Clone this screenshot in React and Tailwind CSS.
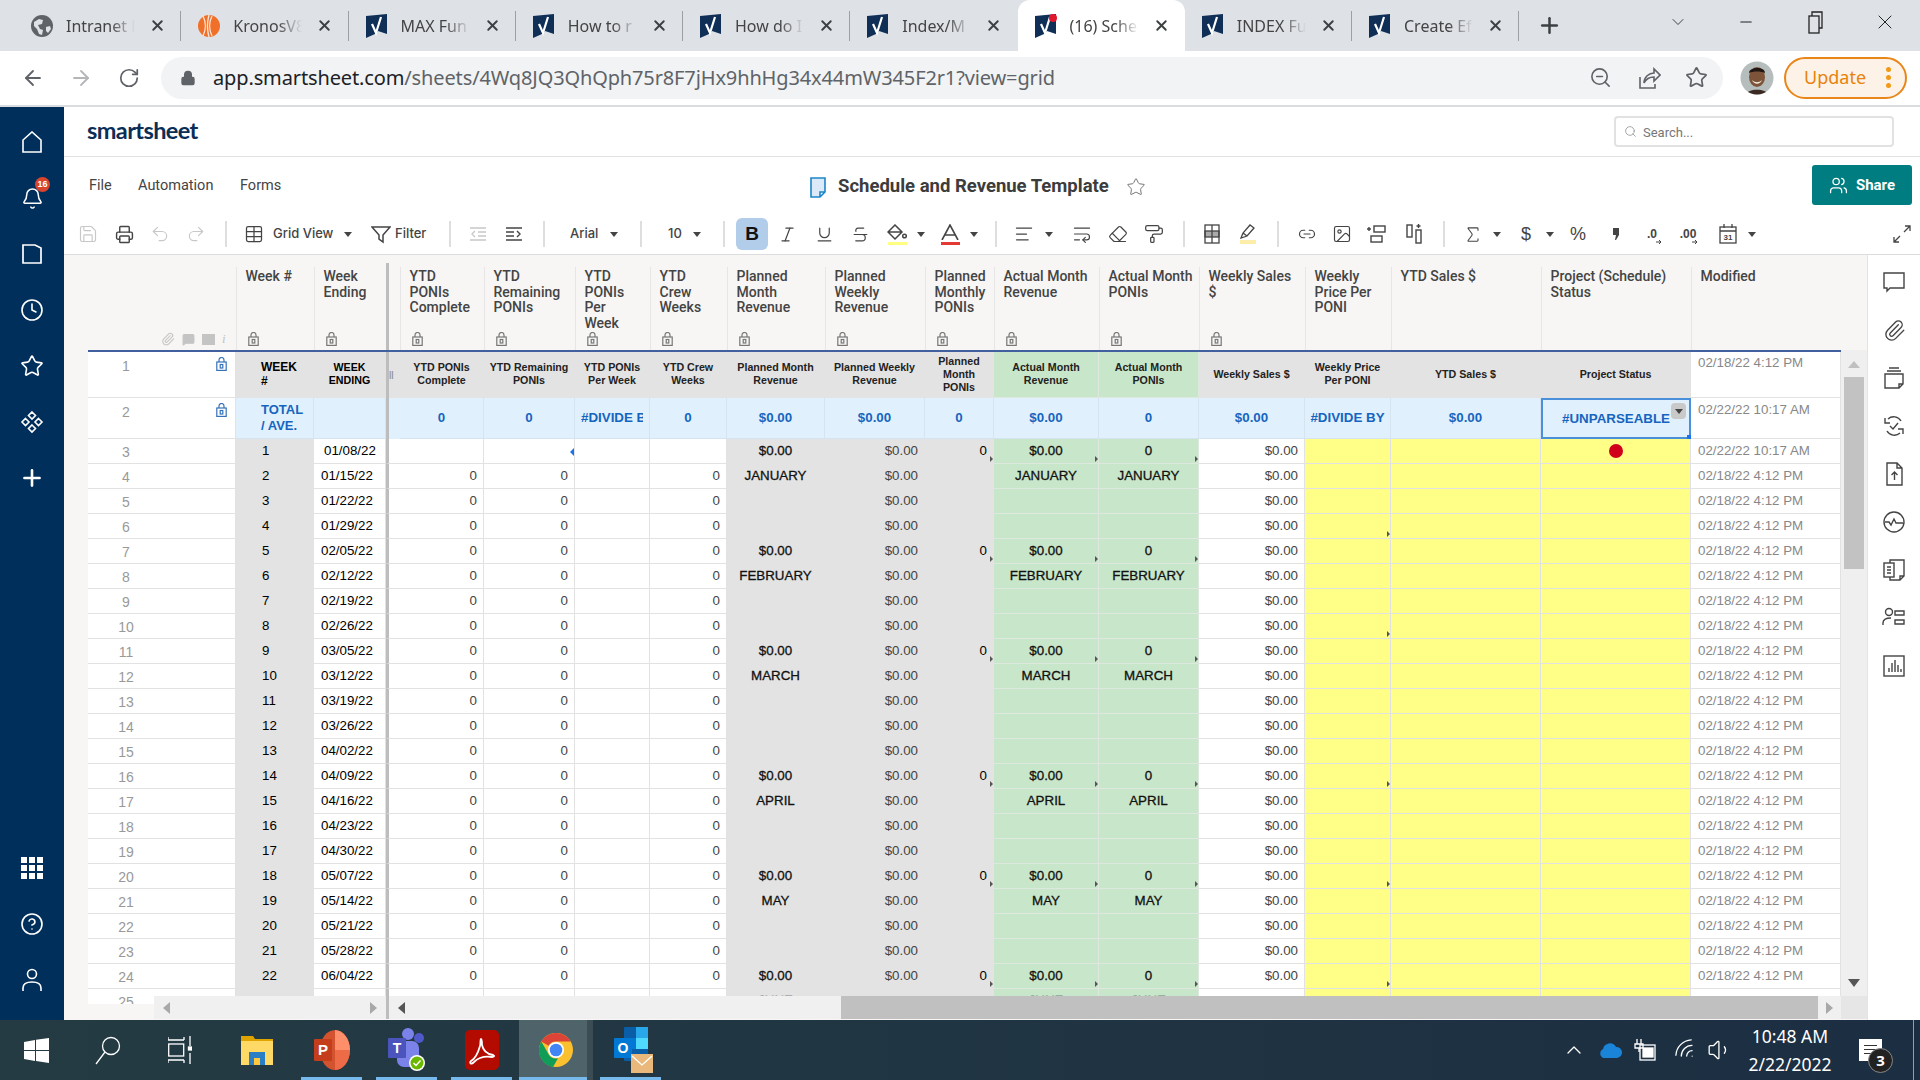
import clsx from "clsx";
import {
  ArrowLeft, ArrowRight, RotateCw, X, Plus, ChevronDown, Minus, Lock, Search, Star,
  ZoomOut, Bell, Clock, CircleHelp, Paperclip, MessageSquare, Save, Printer, Undo2, Redo2,
  Table, Italic, Underline, Strikethrough, AlignLeft, WrapText, Eraser, PaintRoller, Sigma,
  Link2, Image, Users, Volume1, Wifi, ChevronUp,
} from "lucide-react";

const tabs = [
  { title: "Intranet H", icon: "globe" },
  { title: "KronosV8", icon: "kronos" },
  { title: "MAX Fun", icon: "ss" },
  { title: "How to r", icon: "ss" },
  { title: "How do I", icon: "ss" },
  { title: "Index/M", icon: "ss" },
  { title: "(16) Sche", icon: "ss", active: true },
  { title: "INDEX Fu", icon: "ss" },
  { title: "Create Ef", icon: "ss" },
];

const dates = [
  "01/08/22", "01/15/22", "01/22/22", "01/29/22", "02/05/22", "02/12/22", "02/19/22", "02/26/22",
  "03/05/22", "03/12/22", "03/19/22", "03/26/22", "04/02/22", "04/09/22", "04/16/22", "04/23/22",
  "04/30/22", "05/07/22", "05/14/22", "05/21/22", "05/28/22", "06/04/22", "06/11/22",
];

const monthStarts = { 1: "JANUARY", 5: "FEBRUARY", 9: "MARCH", 14: "APRIL", 18: "MAY", 22: "JUNE" };
const priceMarks = [4, 8, 14, 18, 22];

const headers = [
  { label: "Week #", lock: true },
  { label: "Week\nEnding", lock: true },
  { label: "", sliver: true },
  { label: "YTD\nPONIs\nComplete", lock: true },
  { label: "YTD\nRemaining\nPONIs", lock: true },
  { label: "YTD\nPONIs\nPer\nWeek", lock: true },
  { label: "YTD\nCrew\nWeeks", lock: true },
  { label: "Planned\nMonth\nRevenue", lock: true },
  { label: "Planned\nWeekly\nRevenue", lock: true },
  { label: "Planned\nMonthly\nPONIs", lock: true },
  { label: "Actual Month\nRevenue", lock: true },
  { label: "Actual Month\nPONIs", lock: true },
  { label: "Weekly Sales\n$", lock: true },
  { label: "Weekly\nPrice Per\nPONI" },
  { label: "YTD Sales $" },
  { label: "Project (Schedule)\nStatus" },
  { label: "Modified" },
];

const titleRow = [
  "YTD PONIs\nComplete", "YTD Remaining\nPONIs", "YTD PONIs\nPer Week", "YTD Crew\nWeeks",
  "Planned Month\nRevenue", "Planned Weekly\nRevenue", "Planned\nMonth\nPONIs",
];

const totals = ["0", "0", "#DIVIDE BY ZERO", "0", "$0.00", "$0.00", "0", "$0.00", "0", "$0.00", "#DIVIDE BY", "$0.00"];

const gridCols =
  "grid grid-cols-[148px_78px_72px_14px_84px_91px_75px_77px_98px_100px_69px_105px_100px_106px_86px_150px_150px_150px]";

const white = "bg-white border-[#e2e2e2]";
const gray = "bg-[#e3e3e3] border-[#e3e3e3]";
const green = "bg-[#c8e6c9] border-[#dfe8df]";
const yellow = "bg-[#ffff88] border-[#e2e2e2]";
const blue = "bg-[#e1f0fd] border-[#d5e4f0]";

function Favicon({ type, dot }) {
  if (type === "globe") {
    return (
      <svg width="22" height="22" viewBox="0 0 22 22">
        <circle cx="11" cy="11" r="11" fill="#5f6368" />
        <path d="M3 7l5-3 4 1-1 4-4 1 2 4 3 1-1 5-3-1-2-5-3-3zM15 12l4-1 1 3-3 4-2-2z" fill="#dee1e6" />
      </svg>
    );
  }
  if (type === "kronos") {
    return (
      <svg width="22" height="24" viewBox="0 0 22 24">
        <circle cx="11" cy="12" r="11" fill="#f0702a" />
        <path d="M5 2c3 6 3 14 0 20M11 1c-2 7-2 15 0 22M14 2c-3 6-3 14 0 20" stroke="#fde4d2" strokeWidth="1.4" fill="none" />
      </svg>
    );
  }
  return (
    <svg width="22" height="24" viewBox="0 0 22 24">
      <path d="M0 2l21-2v20l-9-3-3 3-9 4z" fill="#0f2f57" />
      <path d="M6 10l4 9 5-16" stroke="#fff" strokeWidth="2.2" fill="none" />
      {dot && <circle cx="18" cy="4" r="4" fill="#e0182d" />}
    </svg>
  );
}

function Caret({ className }) {
  return (
    <svg width="8" height="5" viewBox="0 0 8 5" className={className}>
      <path d="M0 0h8L4 5z" fill="#444" />
    </svg>
  );
}

function Arrow({ dir, color }) {
  return (
    <svg width="7" height="12" viewBox="0 0 7 12">
      <path d={dir === "left" ? "M7 0v12L0 6z" : "M0 0v12l7-6z"} fill={color} />
    </svg>
  );
}

function Corner() {
  return <span className="absolute right-0 bottom-[1px] w-0 h-0 border-y-[3px] border-y-transparent border-l-[3px] border-l-[#555]" />;
}

function SmallLock({ className }) {
  return (
    <svg width="11" height="14" viewBox="0 0 11 14" className={className} fill="none" stroke="currentColor" strokeWidth="1.2">
      <path d="M3 5V3a2.5 2.5 0 0 1 5 0v2" />
      <rect x="0.8" y="5" width="9.4" height="8.4" />
      <rect x="4.2" y="7.5" width="2.6" height="3.5" />
    </svg>
  );
}

function Tabs() {
  return (
    <div className="h-[51px] bg-[#dee1e6] flex items-stretch pl-[14px] font-['Noto_Sans',sans-serif] shrink-0">
      {tabs.map((t, i) => (
        <div
          key={i}
          className={clsx(
            "w-[167.25px] flex items-center pl-[17px] relative",
            t.active && "bg-white rounded-t-xl"
          )}
        >
          <Favicon type={t.icon} dot={t.active} />
          <span className="ml-[13px] w-[72px] overflow-hidden whitespace-nowrap text-[16px] text-[#444] [mask-image:linear-gradient(to_right,black_62%,transparent_96%)]">
            {t.title}
          </span>
          <X size={17} strokeWidth={2.7} className="ml-[11px] text-[#3c4043]" />
          {!t.active && i !== 5 && <span className="absolute right-0 top-[11px] bottom-[10px] w-px bg-[#9aa0a6]" />}
        </div>
      ))}
      <div className="w-[61px] flex items-center justify-center">
        <Plus size={25} strokeWidth={2.4} className="text-[#3c4043]" />
      </div>
      <div className="ml-[76px] w-[44px] flex items-center justify-center pb-[8px]">
        <ChevronDown size={20} strokeWidth={1} className="text-[#222]" />
      </div>
      <div className="ml-[24px] w-[44px] flex items-center justify-center pb-[8px]">
        <Minus size={18} strokeWidth={1.4} className="text-[#222]" />
      </div>
      <div className="ml-[26px] w-[44px] flex items-center justify-center pb-[8px]">
        <svg width="16" height="24" viewBox="0 0 16 24" fill="none" stroke="#222" strokeWidth="1.3">
          <rect x="1" y="6" width="10" height="17" />
          <path d="M4 6V2h10v16h-3" />
        </svg>
      </div>
      <div className="ml-[25px] w-[44px] flex items-center justify-center pb-[8px]">
        <X size={24} strokeWidth={1} className="text-[#222]" />
      </div>
    </div>
  );
}

function AddressBar() {
  return (
    <div className="h-[56px] bg-white border-b-2 border-[#dadce0] flex items-center pb-[1px] shrink-0 font-['Noto_Sans',sans-serif]">
      <ArrowLeft size={24} strokeWidth={1.8} className="ml-[21px] text-[#5f6368]" />
      <ArrowRight size={24} strokeWidth={1.8} className="ml-[24px] text-[#b4b7ba]" />
      <RotateCw size={22} strokeWidth={1.9} className="ml-[25px] text-[#5f6368]" />
      <div className="ml-[21px] w-[1562px] h-[42px] rounded-full bg-[#f1f3f4] flex items-center">
        <Lock size={16} fill="#5f6368" strokeWidth={2} className="ml-[19px] text-[#5f6368]" />
        <span className="ml-[17px] text-[20px] tracking-[-0.13px] text-[#5f6368] whitespace-nowrap w-[1376px]">
          <span className="text-[#202124]">app.smartsheet.com</span>/sheets/4Wq8JQ3QhQph75r8F7jHx9hhHg34x44mW345F2r1?view=grid
        </span>
        <ZoomOut size={23} strokeWidth={1.7} className="text-[#5f6368]" />
        <svg width="24" height="24" viewBox="0 0 24 24" fill="none" stroke="#5f6368" strokeWidth="1.6" className="ml-[25px]">
          <path d="M3 11v11h15v-4M7 17c0-6 5-10 10-10V3l6 6-6 6v-4c-4 0-8 2-10 6z" />
        </svg>
        <Star size={23} strokeWidth={1.8} className="ml-[24px] text-[#5f6368]" />
      </div>
      <svg width="34" height="34" viewBox="0 0 34 34" className="ml-[17px]">
        <defs>
          <clipPath id="av"><circle cx="17" cy="17" r="16.5" /></clipPath>
        </defs>
        <g clipPath="url(#av)">
          <rect width="34" height="34" fill="#b5bdbd" />
          <ellipse cx="17" cy="16" rx="8" ry="10" fill="#7d5439" />
          <path d="M9 12c0-6 16-7 16 0-4-2-12-2-16 0z" fill="#211814" />
          <path d="M12 19c3 3 7 3 10 0-2 5-8 5-10 0z" fill="#f4ecdf" />
          <path d="M6 34c1-7 21-7 22 0z" fill="#3a2a22" />
        </g>
      </svg>
      <div className="ml-[10px] w-[123px] h-[42px] rounded-full border-2 border-[#e9861a] bg-[#fdf2e7] flex items-center text-[#e8820c]">
        <span className="ml-[18px] text-[18px]">Update</span>
        <span className="ml-[20px] flex flex-col gap-[3px]">
          <i className="w-[5px] h-[5px] rounded-full bg-[#f09a1a]" />
          <i className="w-[5px] h-[5px] rounded-full bg-[#f09a1a]" />
          <i className="w-[5px] h-[5px] rounded-full bg-[#f09a1a]" />
        </span>
      </div>
    </div>
  );
}

function Sidebar() {
  const item = "h-14 flex items-center justify-center relative";
  return (
    <div className="w-16 bg-[#012f5b] text-white flex flex-col justify-between shrink-0">
      <div className="pt-[7px]">
        <div className={item}>
          <svg width="20" height="22" viewBox="0 0 20 22" fill="none" stroke="#fff" strokeWidth="1.6"><path d="M1 21V9l9-8 9 8v12z" /></svg>
        </div>
        <div className={item}>
          <Bell size={23} strokeWidth={1.6} />
          <span className="absolute left-[35px] top-[7px] w-[15px] h-[15px] rounded-full bg-[#d8442c] text-[9px] font-bold flex items-center justify-center font-['Liberation_Sans',sans-serif]">16</span>
        </div>
        <div className={item}>
          <svg width="20" height="20" viewBox="0 0 20 20" fill="none" stroke="#fff" strokeWidth="1.7"><path d="M1 1h12l6 3v15H1z" /></svg>
        </div>
        <div className={item}><Clock size={24} strokeWidth={1.6} /></div>
        <div className={item}><Star size={24} strokeWidth={1.6} /></div>
        <div className={item}>
          <svg width="24" height="24" viewBox="0 0 24 24" fill="none" stroke="#fff" strokeWidth="1.6">
            <path d="M12 2l3.5 3.5L12 9 8.500 5.500zM12 15l3.500 3.500L12 22l-3.500-3.500zM5.500 8.500L9 12l-3.500 3.500L2 12zM18.500 8.500L22 12l-3.500 3.500L15 12z" />
          </svg>
        </div>
        <div className={item}><Plus size={26} strokeWidth={2.4} /></div>
      </div>
      <div className="pb-[12px]">
        <div className={item}>
          <svg width="22" height="22" viewBox="0 0 22 22" fill="#fff">
            {[0, 8, 16].map((y) => [0, 8, 16].map((x) => <rect key={`${x}-${y}`} x={x} y={y} width="6" height="6" />))}
          </svg>
        </div>
        <div className={item}><CircleHelp size={24} strokeWidth={1.6} /></div>
        <div className={item}>
          <svg width="20" height="24" viewBox="0 0 20 24" fill="none" stroke="#fff" strokeWidth="1.6">
            <circle cx="10" cy="6" r="4.500" />
            <path d="M1 23v-3c0-4 3-6 9-6s9 2 9 6v3" />
          </svg>
        </div>
      </div>
    </div>
  );
}

function Sep({ className }) {
  return <span className={clsx("w-[2px] h-[26px] bg-[#dedede] shrink-0", className)} />;
}

function Decimal({ label, className }) {
  return (
    <span className={clsx("relative w-5 text-center text-[12px] font-bold font-['Liberation_Sans',sans-serif]", className)}>
      {label}
      <svg width="6" height="5" viewBox="0 0 6 5" fill="none" stroke="#444" strokeWidth="1" className="absolute right-0 -bottom-[2px]">
        <path d="M0 2h5M3 0l2 2-2 2" />
      </svg>
    </span>
  );
}

function Toolbar() {
  const off = "text-[#c8c8c8]";
  const box = "w-9 flex items-center justify-center";
  const one = "w-5 flex items-center justify-center shrink-0";
  return (
    <div className="h-[45px] border-b border-[#dcdcdc] flex items-center pl-[6px] pt-[4px] text-[#444] text-[14px] font-['Inter',sans-serif] font-medium">
      <div className={clsx(box, off)}><Save size={20} strokeWidth={1.4} /></div>
      <div className={box}><Printer size={19} strokeWidth={1.8} /></div>
      <div className={clsx(box, off)}><Undo2 size={20} strokeWidth={1.4} /></div>
      <div className={clsx(box, off)}><Redo2 size={20} strokeWidth={1.4} /></div>
      <Sep className="ml-[11px]" />
      <div className={clsx(one, "ml-[17px]")}><Table size={20} strokeWidth={1.5} /></div>
      <span className="ml-[9px] w-[60px] whitespace-nowrap text-[13px]">Grid View</span>
      <Caret className="ml-[11px]" />
      <svg width="20" height="20" viewBox="0 0 20 20" fill="none" stroke="#444" strokeWidth="1.5" className="ml-[19px]"><path d="M1 3h18l-7 8v7l-4-3v-4z" /></svg>
      <span className="ml-[4px] w-[32px] text-[13px]">Filter</span>
      <Sep className="ml-[22px]" />
      <svg width="20" height="20" viewBox="0 0 20 20" fill="none" stroke="#c8c8c8" strokeWidth="1.4" className="ml-[17px]"><path d="M2 4h16M2 16h16M10 8h8M10 12h8M7 7l-3 3 3 3" /></svg>
      <svg width="20" height="20" viewBox="0 0 20 20" fill="none" stroke="#444" strokeWidth="1.4" className="ml-[16px]"><path d="M2 4h16M2 16h16M2 8h8M2 12h8M13 7l3 3-3 3" /></svg>
      <Sep className="ml-[19px]" />
      <span className="ml-[25px] w-[28px] text-[13px]">Arial</span>
      <Caret className="ml-[12px]" />
      <Sep className="ml-[22px]" />
      <span className="ml-[23px] w-5 text-center text-[13px]">10</span>
      <Caret className="ml-[8px]" />
      <Sep className="ml-[22px]" />
      <div className="ml-[11px] w-8 h-8 rounded-md bg-[#b1cdea] flex items-center justify-center text-[#111] text-[19px] font-bold font-['Liberation_Sans',sans-serif]">B</div>
      <div className={clsx(box, "ml-[1px]")}><Italic size={19} strokeWidth={1.5} /></div>
      <div className={clsx(box, "ml-[1px]")}><Underline size={19} strokeWidth={1.5} /></div>
      <div className={box}><Strikethrough size={19} strokeWidth={1.5} /></div>
      <div className="ml-[7px] w-6 flex flex-col items-center">
        <svg width="20" height="17" viewBox="0 0 20 17" fill="none" stroke="#444" strokeWidth="1.5"><path d="M8 1l7 7-7 7-7-7zM1 8h14" /><circle cx="17.500" cy="12" r="1.800" /></svg>
        <span className="w-[19px] h-[3px] mt-[1px] bg-[#ffff80]" />
      </div>
      <Caret className="ml-[8px]" />
      <div className="ml-[13px] w-6 flex flex-col items-center">
        <svg width="18" height="16" viewBox="0 0 18 16" fill="none" stroke="#444" strokeWidth="1.6"><path d="M1 16L9 1l8 15M4 11h10" /></svg>
        <span className="w-[19px] h-[3px] mt-[2px] bg-[#e53935]" />
      </div>
      <Caret className="ml-[8px]" />
      <Sep className="ml-[17px]" />
      <div className={clsx(one, "ml-[17px]")}><AlignLeft size={20} strokeWidth={1.5} /></div>
      <Caret className="ml-[11px]" />
      <div className={clsx(one, "ml-[19px]")}><WrapText size={20} strokeWidth={1.4} /></div>
      <div className={clsx(one, "ml-[16px]")}><Eraser size={20} strokeWidth={1.4} /></div>
      <div className={clsx(one, "ml-[16px]")}><PaintRoller size={20} strokeWidth={1.5} /></div>
      <Sep className="ml-[19px]" />
      <svg width="20" height="20" viewBox="0 0 20 20" className="ml-[17px]" stroke="#444" strokeWidth="1.3" fill="none">
        <rect x="3" y="7" width="14" height="6" fill="#aaa" />
        <rect x="3" y="1" width="14" height="18" />
        <path d="M10 1v18" />
      </svg>
      <div className="ml-[16px] w-5 flex flex-col items-center">
        <svg width="16" height="15" viewBox="0 0 16 15" fill="none" stroke="#444" strokeWidth="1.3"><path d="M1 14l2-5 7-8 4 3-7 8zM3 9l4 3" /></svg>
        <span className="w-4 h-[4px] bg-[#fdedaa] mt-[1px]" />
      </div>
      <Sep className="ml-[19px]" />
      <div className={clsx(one, "ml-[18px]")}><Link2 size={18} strokeWidth={1.6} /></div>
      <div className={clsx(one, "ml-[15px]")}><Image size={20} strokeWidth={1.4} /></div>
      <svg width="20" height="20" viewBox="0 0 20 20" className="ml-[15px]" fill="none" stroke="#444" strokeWidth="1.4"><rect x="7" y="2" width="11" height="6" /><rect x="4" y="12" width="11" height="6" /><path d="M2 3v4M0 5h4" /></svg>
      <svg width="20" height="20" viewBox="0 0 20 20" className="ml-[17px]" fill="none" stroke="#444" strokeWidth="1.4"><rect x="3" y="1" width="5" height="12" /><rect x="12" y="6" width="5" height="13" /><path d="M14.500 0v4M12.500 2h4" /></svg>
      <Sep className="ml-[19px]" />
      <div className={clsx(one, "ml-[18px]")}><Sigma size={21} strokeWidth={1.3} /></div>
      <Caret className="ml-[10px]" />
      <span className="ml-[15px] w-5 text-center text-[18px] font-normal font-['Liberation_Sans',sans-serif]">$</span>
      <Caret className="ml-[10px]" />
      <span className="ml-[14px] w-5 text-center text-[18px] font-normal font-['Liberation_Sans',sans-serif]">%</span>
      <svg width="20" height="20" viewBox="0 0 20 20" className="ml-[18px]" fill="#444"><path d="M7 4h6v7l-3 5h-1l1-5H7z" /></svg>
      <Decimal label=".0" className="ml-[16px]" />
      <Decimal label=".00" className="ml-[16px]" />
      <svg width="20" height="20" viewBox="0 0 20 20" className="ml-[20px]" fill="none" stroke="#444" strokeWidth="1.3">
        <rect x="2" y="3" width="16" height="16" />
        <path d="M2 7h16M6 0v4M14 0v4" />
        <text x="10" y="16" textAnchor="middle" fontSize="8" fontWeight="700" fill="#444" stroke="none" fontFamily="Liberation Sans">31</text>
      </svg>
      <Caret className="ml-[10px]" />
      <svg width="20" height="20" viewBox="0 0 20 20" className="ml-auto mr-[8px]" fill="none" stroke="#444" strokeWidth="1.3"><path d="M12 8l6-6M13 2h5v5M8 12l-6 6M7 18H2v-5" /></svg>
    </div>
  );
}

function GridHeader() {
  return (
    <div className="h-[95px] bg-[#f7f6f5] pl-6 shrink-0 font-['Roboto',sans-serif]">
      <div className={clsx(gridCols, "h-full")}>
        <div className="mt-[12px] flex items-end justify-end pb-[4px] pr-[9px] gap-[7px] text-[#c4c4c4]">
          <Paperclip size={14} strokeWidth={1.8} />
          <MessageSquare size={13} fill="currentColor" />
          <span className="w-[13px] h-[11px] bg-current mb-[1px]" />
          <span className="w-[5px] text-[13px] italic leading-[14px] font-['Liberation_Serif',serif]">i</span>
        </div>
        {headers.map((h, i) =>
          h.sliver ? (
            <div key={i} className="border-l-[3px] border-[#bdbdbd] mt-[8px]" />
          ) : (
            <div key={i} className="mt-[12px] border-l border-[#e6e6e6] flex flex-col pt-[2px] pl-[8.5px] pb-[4px] text-[14px] leading-[15.7px] font-medium text-[#444] overflow-hidden">
              <span className="whitespace-pre">{h.label}</span>
              {h.lock && <SmallLock className="mt-auto ml-[2px] text-[#777] shrink-0" />}
            </div>
          )
        )}
      </div>
    </div>
  );
}

function Cell({ tone, className, children }) {
  return (
    <div className={clsx("relative border-b border-r flex items-center overflow-hidden whitespace-nowrap", tone, className)}>
      {children}
    </div>
  );
}

function DataRow({ week, date, row }) {
  const month = monthStarts[week - 1];
  const start = monthStarts[week] !== undefined;
  const strong = "justify-center text-[#111] [-webkit-text-stroke:0.3px_#111]";
  const num = "justify-end pr-[6px] text-[#444]";
  const zero = week === 1 ? "" : "0";
  return (
    <div className={clsx(gridCols, "h-[25px] text-[13.33px]")}>
      <Cell tone={white} className="pt-[3px]">
        <span className="w-[76px] text-center text-[#999] text-[14px]">{row}</span>
      </Cell>
      <Cell tone={gray} className="pl-[26px] text-black">{week}</Cell>
      <Cell tone={white} className={clsx("text-black", week === 1 ? "pl-[10px]" : "pl-[7px]")}>{date}</Cell>
      <div className="bg-white border-l-[3px] border-b border-[#bdbdbd] [border-bottom-color:#e2e2e2]" />
      <Cell tone={white} className={num}>{zero}</Cell>
      <Cell tone={white} className={num}>
        {zero}
        {week === 1 && <span className="absolute right-0 top-[9px] w-0 h-0 border-y-[4px] border-y-transparent border-r-[4px] border-r-[#1a73e8]" />}
      </Cell>
      <Cell tone={white} />
      <Cell tone={white} className={num}>{zero}</Cell>
      <Cell tone={gray} className={strong}>{start ? "$0.00" : month}</Cell>
      <Cell tone={gray} className={num}>$0.00</Cell>
      <Cell tone={gray} className="justify-end pr-[6px] text-black">
        {start && "0"}
        {start && <Corner />}
      </Cell>
      <Cell tone={green} className={strong}>
        {start ? "$0.00" : month}
        {start && <Corner />}
      </Cell>
      <Cell tone={green} className={strong}>
        {start ? "0" : month}
        {start && <Corner />}
      </Cell>
      <Cell tone={white} className={num}>$0.00</Cell>
      <Cell tone={yellow}>{priceMarks.includes(week) && <Corner />}</Cell>
      <Cell tone={yellow} />
      <Cell tone={yellow} className="justify-center">
        {week === 1 && <span className="w-[14px] h-[14px] rounded-full bg-[#d0021b]" />}
      </Cell>
      <Cell tone={white} className="pl-[7px] text-[#888]">{week === 1 ? "02/22/22 10:17 AM" : "02/18/22 4:12 PM"}</Cell>
    </div>
  );
}

function GridBody() {
  const small = "justify-center text-center text-[10.67px] leading-[13px] font-bold text-[#222] whitespace-pre pb-[1px]";
  return (
    <div className="w-[1753px] h-[654px] overflow-hidden border-t-2 border-[#41609f] font-['Liberation_Sans',sans-serif]">
      <div className={clsx(gridCols, "h-[46px]")}>
        <Cell tone={white} className="items-start! pt-[4px]">
          <span className="w-[76px] text-center text-[#999] text-[14px]">1</span>
          <SmallLock className="absolute right-[8px] top-[5px] text-[#3572b8]" />
        </Cell>
        <Cell tone={gray} className="pl-[25px] text-[12px] leading-[13.500px] font-bold text-black whitespace-pre">{"WEEK\n#"}</Cell>
        <Cell tone={gray} className={clsx(small, "text-black")}>{"WEEK\nENDING"}</Cell>
        <div className="bg-[#e3e3e3] border-l-[3px] border-[#bdbdbd] text-[10.67px] text-[#888] flex items-center">ll</div>
        {titleRow.map((t, i) => (
          <Cell key={i} tone={gray} className={small}>{t}</Cell>
        ))}
        <Cell tone={green} className={small}>{"Actual Month\nRevenue"}</Cell>
        <Cell tone={green} className={small}>{"Actual Month\nPONIs"}</Cell>
        <Cell tone={gray} className={small}>Weekly Sales $</Cell>
        <Cell tone={gray} className={small}>{"Weekly Price\nPer PONI"}</Cell>
        <Cell tone={gray} className={small}>YTD Sales $</Cell>
        <Cell tone={gray} className={small}>Project Status</Cell>
        <Cell tone={white} className="items-start! pt-[1px] pl-[7px] text-[13.33px] text-[#888]">02/18/22 4:12 PM</Cell>
      </div>
      <div className={clsx(gridCols, "h-[41px] text-[13.33px] font-bold text-[#1565c0]")}>
        <Cell tone={white} className="items-start! pt-[4px] font-normal">
          <span className="w-[76px] text-center text-[#999] text-[14px]">2</span>
          <SmallLock className="absolute right-[8px] top-[5px] text-[#3572b8]" />
        </Cell>
        <Cell tone={blue} className="pl-[25px] text-[13px] leading-[16px] whitespace-pre">{"TOTAL\n/ AVE."}</Cell>
        <Cell tone={blue} />
        <div className="bg-[#e1f0fd] border-l-[3px] border-[#bdbdbd]" />
        {totals.map((t, i) => (
          <Cell key={i} tone={blue} className="justify-center">
            {t === "#DIVIDE BY ZERO" ? <span className="w-[62px] overflow-hidden">{t}</span> : t}
          </Cell>
        ))}
        <div className="relative bg-[#e1f0fd] border-2 border-[#4a8fd9] flex items-center justify-center">
          #UNPARSEABLE
          <span className="absolute right-[3px] top-[3px] w-[15px] h-[16px] bg-[#c9c9c9] rounded-sm flex items-center justify-center"><Caret /></span>
          <span className="absolute -right-[2px] -bottom-[2px] w-[4px] h-[4px] bg-[#1a73e8]" />
        </div>
        <Cell tone={white} className="items-start! pt-[2px] pl-[7px] font-normal text-[#888]">02/22/22 10:17 AM</Cell>
      </div>
      {dates.map((d, i) => (
        <DataRow key={d} week={i + 1} date={d} row={i + 3} />
      ))}
    </div>
  );
}

function HorizontalBar() {
  return (
    <div className="absolute left-[90px] right-0 bottom-[1px] h-[23px] flex bg-[#f0f0f0]">
      <div className="w-[232px] flex items-center justify-between pl-[9px] pr-[9px]">
        <Arrow dir="left" color="#a8a8a8" />
        <Arrow dir="right" color="#a8a8a8" />
      </div>
      <span className="w-[3px] bg-[#bdbdbd]" />
      <div className="w-[24px] flex items-center justify-center"><Arrow dir="left" color="#555" /></div>
      <span className="w-[428px]" />
      <span className="w-[977px] bg-[#c0c0c0]" />
      <div className="w-[23px] flex items-center justify-center"><Arrow dir="right" color="#a8a8a8" /></div>
      <span className="flex-1 bg-[#e6e6e6]" />
    </div>
  );
}

function RightPanel() {
  const item = "h-12 flex items-center justify-center text-[#444]";
  const s = { width: 24, height: 24, viewBox: "0 0 24 24", fill: "none", stroke: "currentColor", strokeWidth: 1.4 };
  return (
    <div className="w-[53px] bg-white border-l border-[#e4e4e4] pt-[3px] shrink-0">
      <div className={item}><svg {...s}><path d="M2 3h20v15H8l-3 3v-3H2z" /></svg></div>
      <div className={item}><Paperclip size={23} strokeWidth={1.4} /></div>
      <div className={item}><svg {...s}><path d="M7 2h10M5 5h14" /><path d="M3 8h18v10l-4 4H3zM21 18h-4v4" /></svg></div>
      <div className={item}><svg {...s}><path d="M19 7a8.500 8.500 0 0 0-13-2M5 17a8.500 8.500 0 0 0 13 2M3 4v5h5M21 20v-5h-5M8 12l3 3 5-6" /></svg></div>
      <div className={item}><svg {...s}><path d="M5 1h10l5 5v17H5zM15 1v5h5M12.500 18v-8M9.500 13l3-3 3 3" /></svg></div>
      <div className={item}><svg {...s}><circle cx="12" cy="12" r="10" /><path d="M3 12h4l2 3 3-6 2 4h7" /></svg></div>
      <div className={item}><svg {...s}><path d="M8 5V2h14v16l-4 4H8v-3M18 22v-4h4" /><rect x="2" y="5" width="10" height="14" /><path d="M5 9h4M5 12h4M5 15h4" /></svg></div>
      <div className={item}><svg {...s}><circle cx="7" cy="6" r="3.500" /><path d="M1 19v-2c0-3 3-5 8-5M13 5h9v4h-9zM13 14h9v4h-9z" /></svg></div>
      <div className={item}><svg {...s}><rect x="2" y="2" width="20" height="20" /><path d="M7 18v-4M10 18V9M13 18V6M16 18v-7M19 18v-3" /></svg></div>
    </div>
  );
}

function Main() {
  return (
    <div className="flex-1 min-w-0 flex flex-col">
      <div className="h-[50px] border-b border-[#e2e2e2] flex items-center justify-between pl-[23px] pr-[26px] shrink-0">
        <span className="text-[23.500px] font-bold tracking-[-0.6px] text-[#0b2e57] pb-[2px] font-['Lato',sans-serif]">smartsheet</span>
        <div className="w-[280px] h-[31px] border-2 border-[#e2e2e2] rounded flex items-center pl-[8px] text-[#777] text-[13px] font-['Roboto',sans-serif]">
          <Search size={13} strokeWidth={1.6} className="text-[#999]" />
          <span className="ml-[6px] pt-[2px]">Search...</span>
        </div>
      </div>
      <div className="h-[53px] flex items-center pl-[25px] pr-[8px] shrink-0 text-[14.500px] text-[#444] font-['Roboto',sans-serif]">
        <span className="w-[22px] mt-[5px]">File</span>
        <span className="ml-[27px] w-[75px] mt-[5px]">Automation</span>
        <span className="ml-[27px] w-[40px] mt-[5px]">Forms</span>
        <svg width="18" height="21" viewBox="0 0 18 21" fill="#dbe9f8" stroke="#1c86c8" strokeWidth="1.6" className="ml-[529px] mt-[7px]"><path d="M2 1h14v14l-5 5H2zM16 15h-5v5" /></svg>
        <span className="ml-[11px] w-[273px] mt-[7px] text-[18.500px] font-bold text-[#3c3c3c] whitespace-nowrap">Schedule and Revenue Template</span>
        <Star size={20} strokeWidth={1.2} className="ml-[15px] mt-[7px] text-[#777]" />
        <div className="ml-auto mt-[3px] w-[100px] h-[40px] bg-[#007d80] rounded-[3px] flex items-center justify-center gap-[8px] text-white font-bold text-[15px]">
          <Users size={19} strokeWidth={1.6} />
          Share
        </div>
      </div>
      <Toolbar />
      <div className="flex-1 min-h-0 flex">
        <div className="flex-1 min-w-0 relative bg-[#f7f6f5] flex flex-col">
          <GridHeader />
          <div className="flex pl-6">
            <GridBody />
            <div className="w-[26px] h-[646px] bg-[#efefef] flex flex-col items-center pt-[11px] px-[3px]">
              <svg width="12" height="7" viewBox="0 0 12 7"><path d="M0 7h12L6 0z" fill="#c0c0c0" /></svg>
              <span className="w-5 h-[192px] mt-[9px] bg-[#c2c2c2]" />
              <svg width="12" height="8" viewBox="0 0 12 8" className="mt-auto mb-[9px]"><path d="M0 0h12L6 8z" fill="#555" /></svg>
            </div>
          </div>
          <HorizontalBar />
        </div>
        <RightPanel />
      </div>
    </div>
  );
}

function Taskbar() {
  const cell = "w-[75px] h-full flex items-center justify-center relative";
  const open = "absolute left-[7px] right-[7px] bottom-0 h-[3px] bg-[#76b9ed]";
  return (
    <div className="h-[60px] shrink-0 flex items-stretch bg-[linear-gradient(to_right,#243b43,#1c2e42)] text-white font-['Noto_Sans',sans-serif]">
      <div className="w-[72px] flex items-center justify-center">
        <svg width="25" height="25" viewBox="0 0 25 25" fill="#fff"><path d="M0 4l11-2v10H0zM12 1.800L25 0v12H12zM0 13h11v10L0 21zM12 13h13v12l-13-2z" /></svg>
      </div>
      <div className="w-[72px] flex items-center justify-center">
        <svg width="26" height="30" viewBox="0 0 26 30" fill="none" stroke="#fff" strokeWidth="1.300"><circle cx="16" cy="11" r="8.500" /><path d="M10 17L1 29" /></svg>
      </div>
      <div className="w-[72px] flex items-center justify-center">
        <svg width="24" height="30" viewBox="0 0 24 30" fill="none" stroke="#fff" strokeWidth="1.300"><rect x="0.700" y="9" width="15" height="12" /><path d="M0 5h16M0 2v3M16 2v3M0 25h16M0 25v3M16 25v3M22 1v10M22 18v11" /><rect x="20.500" y="12" width="3" height="3" fill="#fff" /></svg>
      </div>
      <div className="w-[3px]" />
      <div className={cell}>
        <svg width="32" height="32" viewBox="0 0 32 32"><path d="M0 2h12l2 3h18v4H0z" fill="#e0a400" /><path d="M0 7h32v24H0z" fill="#ffd966" /><path d="M8 31V18h16v13h-5v-7h-6v7z" fill="#2a7fc4" /><rect x="13" y="24" width="6" height="7" fill="#ffc83d" /></svg>
      </div>
      <div className={cell}>
        <svg width="36" height="42" viewBox="0 0 36 42">
          <ellipse cx="21" cy="21" rx="15" ry="20" fill="#d35230" />
          <path d="M21 1c8 0 15 9 15 20H21z" fill="#ff8f6b" />
          <path d="M36 21c0 11-7 20-15 20V21z" fill="#ed6c47" />
          <rect x="0" y="10" width="18" height="22" rx="1" fill="#c43e1c" />
          <text x="9" y="26" textAnchor="middle" fontSize="15" fontWeight="700" fill="#fff" fontFamily="Liberation Sans">P</text>
        </svg>
        <span className={open} />
      </div>
      <div className={cell}>
        <svg width="38" height="46" viewBox="0 0 38 46">
          <circle cx="20" cy="7" r="6" fill="#7b83eb" />
          <circle cx="31" cy="11" r="5" fill="#5059c9" />
          <rect x="9" y="14" width="22" height="26" rx="7" fill="#7b83eb" />
          <rect x="0" y="11" width="18" height="20" rx="1" fill="#4b53bc" />
          <text x="9" y="26" textAnchor="middle" fontSize="14" fontWeight="700" fill="#fff" fontFamily="Liberation Sans">T</text>
          <circle cx="29" cy="36" r="8" fill="#fff" />
          <circle cx="29" cy="36" r="6.500" fill="#6bb700" />
          <path d="M25.500 36l2.500 2.500 4.500-5" stroke="#fff" strokeWidth="1.500" fill="none" />
        </svg>
        <span className={open} />
      </div>
      <div className={cell}>
        <svg width="34" height="40" viewBox="0 0 34 40">
          <rect width="34" height="40" rx="5" fill="#b30b00" />
          <path d="M6 31c4-2 7-8 9-15 1-4 0-7 1-7s1 4 1 6c1 5 5 9 11 10 2 1 1 2-1 2-7-1-14 1-18 5-3 3-5 1-3-1z" fill="none" stroke="#fff" strokeWidth="1.800" />
        </svg>
        <span className={open} />
      </div>
      <div className="w-[68px] h-full flex items-center justify-center relative bg-[#4f636b] pl-[5px]">
        <svg width="34" height="34" viewBox="0 0 34 34">
          <circle cx="17" cy="17" r="17" fill="#fbc02d" />
          <path d="M17 0a17 17 0 0 1 14.700 8.500H17A8.500 8.500 0 0 0 9.600 12.800L2.300 8.500A17 17 0 0 1 17 0z" fill="#db4437" />
          <path d="M2.300 8.500L9.600 21.200A8.500 8.500 0 0 0 19 25.200L14 34A17 17 0 0 1 2.300 8.500z" fill="#0f9d58" />
          <circle cx="17" cy="17" r="8" fill="#fff" />
          <circle cx="17" cy="17" r="6.300" fill="#4285f4" />
        </svg>
        <span className="absolute inset-x-0 bottom-0 h-[3px] bg-[#76b9ed]" />
      </div>
      <span className="w-[6px] bg-[#3b4c55]" />
      <div className={clsx(cell, "pl-[6px]")}>
        <svg width="40" height="46" viewBox="0 0 40 46">
          <rect x="10" y="0" width="24" height="34" rx="1" fill="#0a5ea8" />
          <rect x="22" y="0" width="12" height="11" fill="#28a8ea" />
          <rect x="22" y="11" width="12" height="11" fill="#50d9ff" />
          <rect x="10" y="11" width="12" height="11" fill="#0078d4" />
          <rect x="0" y="11" width="18" height="20" rx="1" fill="#0078d4" />
          <text x="9" y="26" textAnchor="middle" fontSize="14" fontWeight="700" fill="#fff" fontFamily="Liberation Sans">O</text>
          <rect x="17" y="27" width="22" height="19" fill="#e9b87a" />
          <path d="M18 29l10 9 10-9" stroke="#fff" strokeWidth="1.300" fill="none" />
        </svg>
        <span className={open} />
      </div>
      <div className="ml-auto flex items-center">
        <ChevronUp size={24} strokeWidth={1.3} />
        <svg width="24" height="18" viewBox="0 0 24 18" className="ml-[12px]"><path d="M5 17a5 5 0 0 1 0-9 7 7 0 0 1 13-2 5.500 5.500 0 0 1 1 11z" fill="#1a84d8" /></svg>
        <svg width="26" height="24" viewBox="0 0 26 24" className="ml-[11px]" fill="none" stroke="#fff" strokeWidth="1.300"><path d="M4 1v5M8 1v5M2 6h8v4H2zM6 10v4" /><rect x="7" y="7" width="15" height="15" /><rect x="10" y="10" width="10" height="9" fill="#fff" /></svg>
        <Wifi size={26} strokeWidth={1.2} className="ml-[14px] -rotate-45" />
        <Volume1 size={26} strokeWidth={1.2} className="ml-[8px]" />
        <div className="ml-[12px] w-[90px] flex flex-col items-center text-[17.500px] leading-[28px]">
          <span>10:48 AM</span>
          <span>2/22/2022</span>
        </div>
        <div className="ml-[20px] w-[32px] h-[46px] relative">
          <div className="absolute left-[4px] top-[12px] w-[23px] h-[22px] bg-white flex flex-col gap-[3px] px-[5px] pt-[6px]">
            <i className="h-px bg-[#333]" />
            <i className="h-px bg-[#333]" />
            <i className="h-px bg-[#333]" />
          </div>
          <span className="absolute left-[13px] top-[21px] w-[25px] h-[25px] rounded-full border border-[#888] bg-[#222] text-white text-[15px] font-bold flex items-center justify-center">3</span>
        </div>
        <span className="ml-[26px] w-px h-full bg-[#8fa0a8]" />
        <span className="w-[6px]" />
      </div>
    </div>
  );
}

export default function App() {
  return (
    <div className="w-[1920px] h-[1080px] overflow-hidden flex flex-col bg-white">
      <Tabs />
      <AddressBar />
      <div className="flex-1 min-h-0 flex">
        <Sidebar />
        <Main />
      </div>
      <Taskbar />
    </div>
  );
}
